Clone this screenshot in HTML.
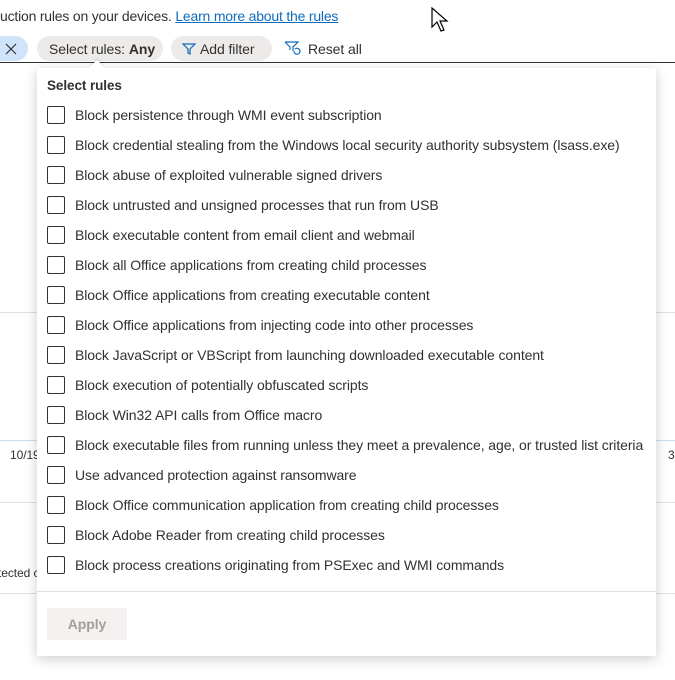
<!DOCTYPE html>
<html><head><style>
body{margin:0;width:675px;height:680px;overflow:hidden;background:#fff;font-family:"Liberation Sans",sans-serif;font-size:14px;letter-spacing:-0.08px;color:#323130;position:relative}
.a{position:absolute}
.line{position:absolute;height:1px;background:#e1dfdd}
.row{position:absolute;left:47px;height:20px;display:flex;align-items:center;white-space:nowrap}
.cb{width:18px;height:18px;border:1px solid #323130;border-radius:2px;box-sizing:border-box;margin-right:10px;flex:none}
.pill{position:absolute;top:36px;height:25px;border-radius:13px;background:#edebe9;display:flex;align-items:center;font-size:14px}
</style></head><body>
<div class="a" style="left:0;top:8px;white-space:nowrap;letter-spacing:-0.2px">uction rules on your devices. <span style="color:#0f6cbd;text-decoration:underline">Learn more about the rules</span></div>
<svg class="a" style="left:431px;top:7px" width="20" height="26" viewBox="0 0 20 26"><path d="M1 1 L1 20 L6 15 L10 24 L13 23 L9 14 L16 14 Z" fill="#fff" stroke="#000" stroke-width="1.2"/></svg>
<div class="pill" style="left:-10px;width:38px;background:#cfe4fa"><svg style="margin-left:15px" width="12" height="12" viewBox="0 0 12 12"><path d="M1 1L11 11M11 1L1 11" stroke="#323130" stroke-width="1.2"/></svg></div>
<div class="pill" style="left:37px;width:126px"><span style="margin-left:12px">Select rules: <b style="font-weight:600">Any</b></span></div>
<div class="pill" style="left:171px;width:101px;top:36px"><svg style="margin-left:11px" width="14" height="14" viewBox="0 0 14 14"><path d="M1 2h12l-5 5v5l-2-1V7z" fill="none" stroke="#0f6cbd" stroke-width="1.2"/></svg><span style="margin-left:4px">Add filter</span></div>
<svg class="a" style="left:284px;top:41px" width="17" height="16" viewBox="0 0 17 16"><path d="M1 1h13l-5 5v4M6 9V6L1 1" fill="none" stroke="#0f6cbd" stroke-width="1.2"/><path d="M10 10a3 3 0 1 0 1-2" fill="none" stroke="#0f6cbd" stroke-width="1.2"/></svg>
<div class="a" style="left:308px;top:41px">Reset all</div>
<div class="a" style="left:0;top:62px;width:675px;height:1px;background:#323130"></div>
<div class="line" style="left:0;top:312px;width:675px"></div>
<div class="line" style="left:0;top:440px;width:675px;background:#c7e0f4"></div>
<div class="line" style="left:0;top:502px;width:675px"></div>
<div class="line" style="left:0;top:593px;width:675px"></div>
<div class="a" style="left:10px;top:448px;font-size:12px">10/19</div>
<div class="a" style="left:668px;top:448px;font-size:12px">3</div>
<div class="a" style="left:-2px;top:566px;font-size:12px">tected c</div>
<div class="a" style="left:37px;top:68px;width:619px;height:588px;background:#fff;box-shadow:0 3px 12px rgba(0,0,0,.2)"></div>
<div class="a" style="left:92px;top:62px;width:10px;height:10px;background:#fff;transform:rotate(45deg);box-shadow:-1px -1px 2px rgba(0,0,0,.1)"></div>
<div class="a" style="left:47px;top:78px;font-weight:bold;font-size:13.5px">Select rules</div>
<div class="row" style="top:105px"><div class="cb"></div>Block persistence through WMI event subscription</div>
<div class="row" style="top:135px"><div class="cb"></div>Block credential stealing from the Windows local security authority subsystem (lsass.exe)</div>
<div class="row" style="top:165px"><div class="cb"></div>Block abuse of exploited vulnerable signed drivers</div>
<div class="row" style="top:195px"><div class="cb"></div>Block untrusted and unsigned processes that run from USB</div>
<div class="row" style="top:225px"><div class="cb"></div>Block executable content from email client and webmail</div>
<div class="row" style="top:255px"><div class="cb"></div>Block all Office applications from creating child processes</div>
<div class="row" style="top:285px"><div class="cb"></div>Block Office applications from creating executable content</div>
<div class="row" style="top:315px"><div class="cb"></div>Block Office applications from injecting code into other processes</div>
<div class="row" style="top:345px"><div class="cb"></div>Block JavaScript or VBScript from launching downloaded executable content</div>
<div class="row" style="top:375px"><div class="cb"></div>Block execution of potentially obfuscated scripts</div>
<div class="row" style="top:405px"><div class="cb"></div>Block Win32 API calls from Office macro</div>
<div class="row" style="top:435px"><div class="cb"></div>Block executable files from running unless they meet a prevalence, age, or trusted list criteria</div>
<div class="row" style="top:465px"><div class="cb"></div>Use advanced protection against ransomware</div>
<div class="row" style="top:495px"><div class="cb"></div>Block Office communication application from creating child processes</div>
<div class="row" style="top:525px"><div class="cb"></div>Block Adobe Reader from creating child processes</div>
<div class="row" style="top:555px"><div class="cb"></div>Block process creations originating from PSExec and WMI commands</div>
<div class="line" style="left:37px;top:591px;width:619px"></div>
<div class="a" style="left:47px;top:608px;width:80px;height:32px;background:#f3f2f1;color:#a19f9d;font-weight:bold;display:flex;align-items:center;justify-content:center">Apply</div>
</body></html>
